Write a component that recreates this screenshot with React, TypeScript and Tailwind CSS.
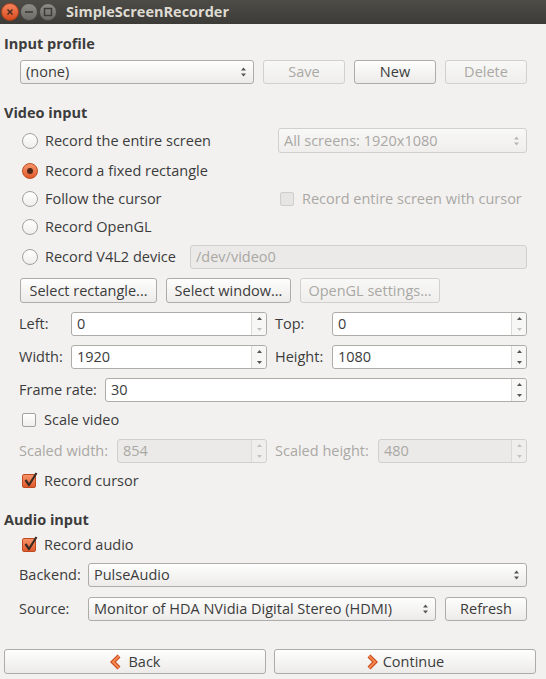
import React from "react";

const TXT = "text-[#3c3c3c]";
const DIS = "text-[#aaa8a4]";

function UpDown({ disabled }: { disabled?: boolean }) {
  const c = disabled ? "#b8b6b2" : "#555555";
  return (
    <svg width="7" height="14" viewBox="0 0 7 14" className="shrink-0">
      <path d="M3.5 2.5 L6 5.5 L1 5.5 Z" fill={c} />
      <path d="M1 8.5 L6 8.5 L3.5 11.5 Z" fill={c} />
    </svg>
  );
}

function Combo({ text, disabled, className = "" }: { text: string; disabled?: boolean; className?: string }) {
  return (
    <div
      className={`h-full flex items-center rounded-[3px] border pl-[5px] pr-[6px] ${
        disabled
          ? "border-[#d2d0cc] bg-gradient-to-b from-[#f8f8f7] to-[#efeeec] " + DIS
          : "border-[#aeaca8] bg-gradient-to-b from-[#fefefe] to-[#ecebe9] " + TXT
      } ${className}`}
    >
      <span className="flex-1 whitespace-nowrap leading-[20px] min-w-0">{text}</span>
      <UpDown disabled={disabled} />
    </div>
  );
}

function Btn({ children, disabled, className = "" }: { children: React.ReactNode; disabled?: boolean; className?: string }) {
  return (
    <div
      className={`h-full flex items-center justify-center rounded-[3px] border whitespace-nowrap ${
        disabled
          ? "border-[#d2d0cc] bg-gradient-to-b from-[#f8f8f7] to-[#efeeec] " + DIS
          : "border-[#aeaca8] bg-gradient-to-b from-[#fefefe] to-[#ecebe9] " + TXT
      } ${className}`}
    >
      {children}
    </div>
  );
}

function Spin({ value, disabled, downDisabled, className = "" }: { value: string; disabled?: boolean; downDisabled?: boolean; className?: string }) {
  const up = disabled ? "#c4c2be" : "#555555";
  const down = disabled || downDisabled ? "#c4c2be" : "#555555";
  return (
    <div
      className={`h-full flex rounded-[3px] border ${
        disabled ? "border-[#d2d0cc] bg-[#ebeae8] " + DIS : "border-[#aeaca8] bg-white " + TXT
      } ${className}`}
    >
      <div className="flex-1 flex items-center pl-[5px] min-w-0">{value}</div>
      <div
        className={`w-[15px] shrink-0 flex flex-col border-l rounded-r-[3px] ${
          disabled ? "border-[#dcdad6] bg-[#efeeec]" : "border-[#dcdad6] bg-[#f7f7f6]"
        }`}
      >
        <div className="flex-1 flex items-center justify-center">
          <svg width="5" height="3" viewBox="0 0 5 3">
            <path d="M2.5 0 L5 3 L0 3 Z" fill={up} />
          </svg>
        </div>
        <div className="flex-1 flex items-center justify-center">
          <svg width="5" height="3" viewBox="0 0 5 3">
            <path d="M0 0 L5 0 L2.5 3 Z" fill={down} />
          </svg>
        </div>
      </div>
    </div>
  );
}

function Radio({ checked }: { checked?: boolean }) {
  return checked ? (
    <div className="w-[16px] h-[16px] rounded-full border border-[#bf4a1f] bg-gradient-to-b from-[#f6946a] to-[#e0592a] flex items-center justify-center shrink-0">
      <div className="w-[6px] h-[6px] rounded-full bg-[#4d2818]" />
    </div>
  ) : (
    <div className="w-[16px] h-[16px] rounded-full border border-[#a3a19d] bg-gradient-to-b from-white to-[#efeeec] shrink-0" />
  );
}

function Check({ checked, disabled }: { checked?: boolean; disabled?: boolean }) {
  if (checked)
    return (
      <div className="relative w-[14px] h-[14px] shrink-0">
        <div className="absolute inset-0 rounded-[2px] border border-[#bf4a1f] bg-gradient-to-b from-[#f6946a] to-[#e0592a]" />
        <svg className="absolute left-[1px] top-[-3px]" width="15" height="17" viewBox="0 0 15 17">
          <path d="M2.5 9 L6 14 L13.5 2" stroke="#3b2b23" strokeWidth="2.2" fill="none" strokeLinejoin="round" />
        </svg>
      </div>
    );
  return (
    <div
      className={`w-[14px] h-[14px] rounded-[2px] border shrink-0 ${
        disabled ? "border-[#d0cecb] bg-[#e6e5e3]" : "border-[#a3a19d] bg-gradient-to-b from-white to-[#efeeec]"
      }`}
    />
  );
}

function Header({ children, className = "" }: { children: React.ReactNode; className?: string }) {
  return <div className={`h-[20px] flex items-center pl-[4px] font-bold ${TXT} ${className}`}>{children}</div>;
}

function Chevron({ dir }: { dir: "left" | "right" }) {
  const pts = dir === "left" ? "9,2 3,8 9,14" : "3,2 9,8 3,14";
  return (
    <svg width="12" height="16" viewBox="0 0 12 16" className="shrink-0">
      <polyline points={pts} stroke="#c84a1c" strokeWidth="4.2" fill="none" strokeLinejoin="miter" />
      <polyline points={pts} stroke="#f58750" strokeWidth="2" fill="none" strokeLinejoin="miter" />
    </svg>
  );
}

export default function App() {
  return (
    <div className={`w-[546px] h-[679px] bg-[#f2f1f0] ${TXT} text-[14.5px] leading-[20px] font-['Open_Sans',sans-serif] flex flex-col overflow-hidden`}>
      {/* Title bar */}
      <div className="h-[24px] shrink-0 flex items-center bg-gradient-to-b from-[#4e4c47] to-[#3c3b37] pl-[1px]">
        <div className="flex gap-[1px]">
          <div className="w-[18px] h-[18px] rounded-full border border-[#a9401a] bg-gradient-to-b from-[#f4835a] to-[#d84a1b] flex items-center justify-center">
            <svg width="8" height="8" viewBox="0 0 8 8">
              <path d="M1.5 1.5 L6.5 6.5 M6.5 1.5 L1.5 6.5" stroke="#3d2a22" strokeWidth="1.4" />
            </svg>
          </div>
          <div className="w-[18px] h-[18px] rounded-full border border-[#4a4945] bg-gradient-to-b from-[#8e8d88] to-[#6c6b66] flex items-center justify-center">
            <svg width="10" height="10" viewBox="0 0 10 10">
              <path d="M1 5 L9 5" stroke="#3c3b37" strokeWidth="1.6" />
            </svg>
          </div>
          <div className="w-[18px] h-[18px] rounded-full border border-[#4a4945] bg-gradient-to-b from-[#8e8d88] to-[#6c6b66] flex items-center justify-center">
            <svg width="10" height="10" viewBox="0 0 10 10">
              <rect x="1.5" y="1.5" width="7" height="7" stroke="#3c3b37" strokeWidth="1.4" fill="none" />
            </svg>
          </div>
        </div>
        <span className="ml-[9px] font-bold text-[#dfdbd2] text-[14.5px]">SimpleScreenRecorder</span>
      </div>

      {/* Input profile */}
      <Header className="mt-[10px]">Input profile</Header>
      <div className="mt-[6px] h-[24px] flex gap-[9px] pl-[20px] pr-[19px]">
        <Combo text="(none)" className="w-[234px]" />
        <Btn disabled className="w-[82px]">Save</Btn>
        <Btn className="w-[82px]">New</Btn>
        <Btn disabled className="w-[82px]">Delete</Btn>
      </div>

      {/* Video input */}
      <Header className="mt-[19px]">Video input</Header>
      <div className="pl-[19px] pr-[19px] flex flex-col">
        <div className="mt-[5px] h-[25px] flex items-center">
          <div className="flex-1 flex items-center gap-[7px] pl-[3px]">
            <Radio />
            <span>Record the entire screen</span>
          </div>
          <Combo text="All screens: 1920x1080" disabled className="w-[249px]" />
        </div>
        <div className="mt-[6px] h-[24px] flex items-center gap-[7px] pl-[3px]">
          <Radio checked />
          <span>Record a fixed rectangle</span>
        </div>
        <div className="mt-[4px] h-[24px] flex items-center">
          <div className="flex-1 flex items-center gap-[7px] pl-[3px]">
            <Radio />
            <span>Follow the cursor</span>
          </div>
          <div className={`w-[247px] flex items-center gap-[8px] ${DIS}`}>
            <Check disabled />
            <span className="whitespace-nowrap">Record entire screen with cursor</span>
          </div>
        </div>
        <div className="mt-[4px] h-[24px] flex items-center gap-[7px] pl-[3px]">
          <Radio />
          <span>Record OpenGL</span>
        </div>
        <div className="mt-[6px] h-[24px] flex items-center">
          <div className="flex-1 flex items-center gap-[7px] pl-[3px]">
            <Radio />
            <span>Record V4L2 device</span>
          </div>
          <div className={`w-[337px] h-full flex items-center pl-[5px] rounded-[3px] border border-[#d2d0cc] bg-[#ebeae8] ${DIS}`}>
            /dev/video0
          </div>
        </div>
        <div className="mt-[9px] h-[25px] flex gap-[9px] pl-[1px]">
          <Btn className="w-[137px]">Select rectangle...</Btn>
          <Btn className="w-[125px]">Select window...</Btn>
          <Btn disabled className="w-[140px]">OpenGL settings...</Btn>
        </div>
        <div className="mt-[9px] h-[24px] flex gap-[8px]">
          <div className="w-[248px] flex items-center">
            <span className="w-[52px]">Left:</span>
            <Spin value="0" downDisabled className="flex-1" />
          </div>
          <div className="flex-1 flex items-center">
            <span className="w-[57px]">Top:</span>
            <Spin value="0" downDisabled className="flex-1" />
          </div>
        </div>
        <div className="mt-[9px] h-[24px] flex gap-[8px]">
          <div className="w-[248px] flex items-center">
            <span className="w-[52px]">Width:</span>
            <Spin value="1920" className="flex-1" />
          </div>
          <div className="flex-1 flex items-center">
            <span className="w-[57px]">Height:</span>
            <Spin value="1080" className="flex-1" />
          </div>
        </div>
        <div className="mt-[9px] h-[24px] flex items-center">
          <span className="w-[86px]">Frame rate:</span>
          <Spin value="30" className="flex-1" />
        </div>
        <div className="mt-[7px] h-[22px] flex items-center gap-[8px] pl-[3px]">
          <Check />
          <span>Scale video</span>
        </div>
        <div className={`mt-[8px] h-[24px] flex gap-[8px] ${DIS}`}>
          <div className="w-[248px] flex items-center">
            <span className="w-[98px] whitespace-nowrap">Scaled width:</span>
            <Spin value="854" disabled className="flex-1" />
          </div>
          <div className="flex-1 flex items-center">
            <span className="w-[103px] whitespace-nowrap">Scaled height:</span>
            <Spin value="480" disabled className="flex-1" />
          </div>
        </div>
        <div className="mt-[7px] h-[22px] flex items-center gap-[8px] pl-[3px]">
          <Check checked />
          <span>Record cursor</span>
        </div>
      </div>

      {/* Audio input */}
      <Header className="mt-[18px]">Audio input</Header>
      <div className="pl-[19px] pr-[19px] flex flex-col">
        <div className="mt-[4px] h-[22px] flex items-center gap-[8px] pl-[3px]">
          <Check checked />
          <span>Record audio</span>
        </div>
        <div className="mt-[7px] h-[24px] flex items-center">
          <span className="w-[69px]">Backend:</span>
          <Combo text="PulseAudio" className="flex-1" />
        </div>
        <div className="mt-[10px] h-[24px] flex items-center gap-[9px]">
          <div className="flex-1 h-full flex items-center">
            <span className="w-[69px]">Source:</span>
            <Combo text="Monitor of HDA NVidia Digital Stereo (HDMI)" className="flex-1" />
          </div>
          <Btn className="w-[82px]">Refresh</Btn>
        </div>
      </div>

      {/* Bottom buttons */}
      <div className="mt-[28px] h-[25px] flex gap-[8px] pl-[4px]">
        <Btn className="w-[262px] gap-[7px]">
          <Chevron dir="left" />
          <span>Back</span>
        </Btn>
        <Btn className="w-[262px] gap-[5px]">
          <Chevron dir="right" />
          <span>Continue</span>
        </Btn>
      </div>
    </div>
  );
}
